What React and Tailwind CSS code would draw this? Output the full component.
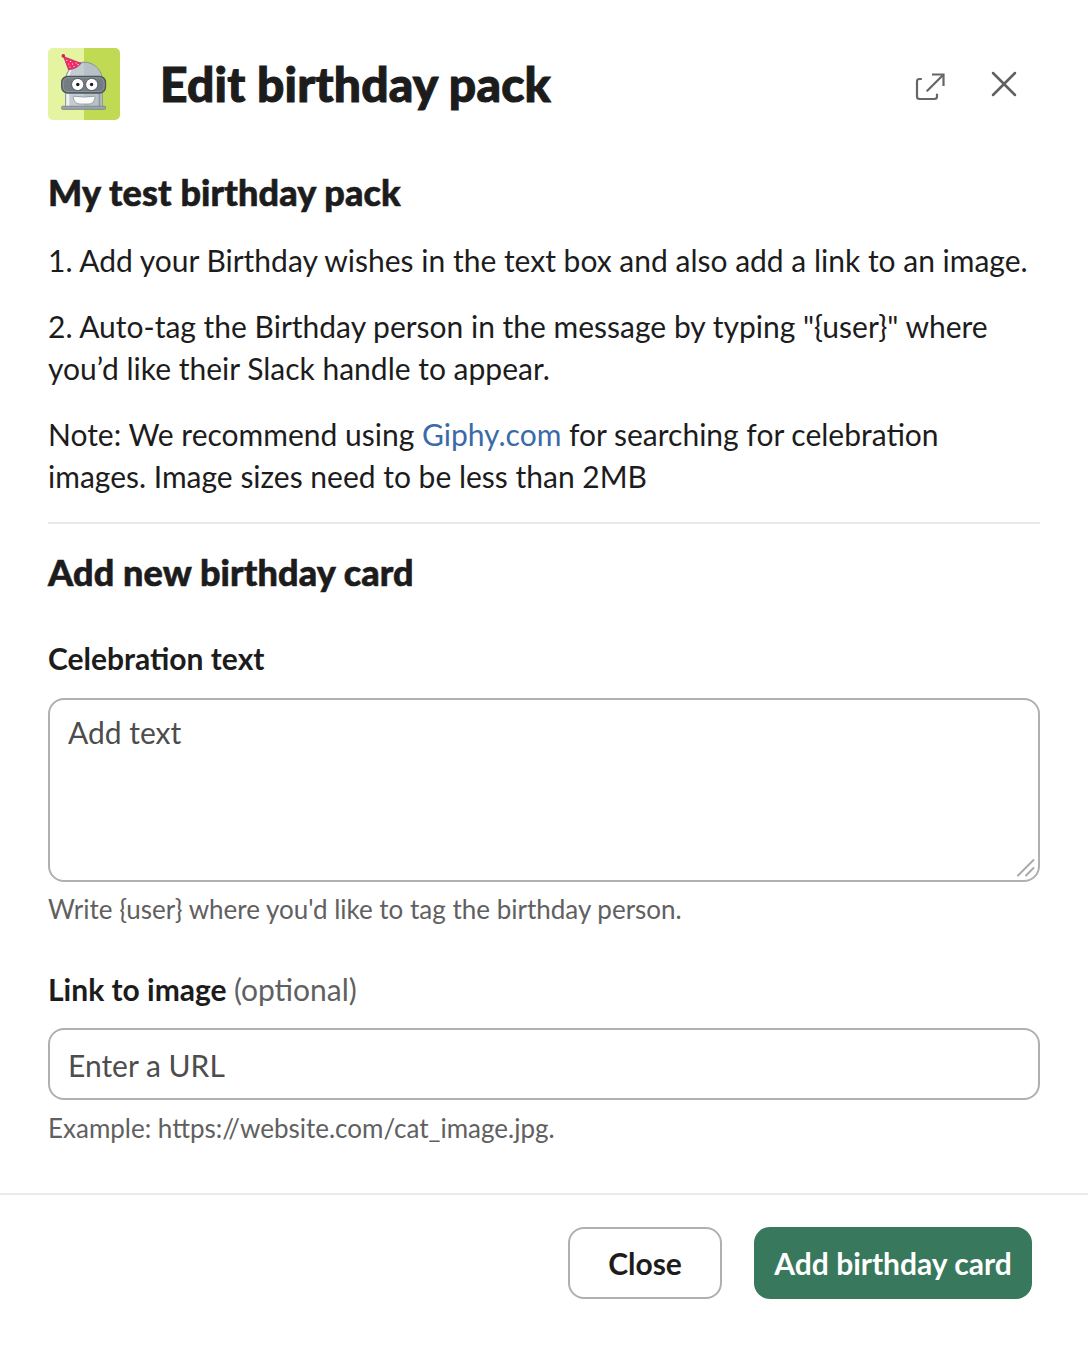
import { useState } from 'react'

function RobotLogo() {
  return (
    <svg viewBox="0 0 72 72" className="size-[72px] shrink-0 rounded-[5px]">
      <rect width="36" height="72" fill="#e4f4a0" />
      <rect x="36" width="36" height="72" fill="#c0da54" />
      {/* head */}
      <path d="M17.700 59V32a18.200 17.700 0 0 1 36.600 0v27z" fill="#c3cdd1" stroke="#858f95" strokeWidth="1" />
      <path d="M18.300 58V32q1-10 8-14.500-5 6-5 14.500v26z" fill="#eef2f3" />
      <path d="M36 14.800q17 1 17.800 17.200v26.500H36z" fill="#a9b5ba" opacity=".5" />
      <path d="M51.500 44v14.500" stroke="#8b979c" strokeWidth="1.600" />
      <rect x="13.600" y="58.200" width="44" height="3.200" rx="1" fill="#9aa4aa" stroke="#727c82" strokeWidth=".7" />
      {/* visor */}
      <rect x="13.700" y="28.300" width="43.800" height="16.700" rx="6" fill="#737b83" stroke="#4d555d" strokeWidth="1.300" />
      <rect x="15.200" y="29.800" width="40.800" height="13.700" rx="4.800" fill="none" stroke="#989fa5" strokeWidth=".7" />
      <circle cx="29.700" cy="36.500" r="6.100" fill="#fff" stroke="#454d54" strokeWidth=".8" />
      <circle cx="43.700" cy="36.500" r="6.100" fill="#fff" stroke="#454d54" strokeWidth=".8" />
      <circle cx="29.800" cy="36.500" r="1.700" fill="#181c1f" />
      <circle cx="43.600" cy="36.500" r="1.700" fill="#181c1f" />
      {/* mouth */}
      <path d="M26 48.300q10.200 1.500 20.300 0 .9 0 .7 1.200c-.8 4.700-3.500 6.500-7 6.500h-7.500c-4 0-6.500-2-7.200-6.500-.1-.9.100-1.300.7-1.200z" fill="#fafafa" stroke="#7b858a" strokeWidth=".7" />
      {/* party hat */}
      <path d="M15.500 8.500L33.200 15.300q-4.500 5.800-12.700 6.500z" fill="#f02a68" stroke="#a92350" strokeWidth=".6" />
      <path d="M18.800 12.300h.1M22.500 13.300h.1M20.600 16h.1M24.500 16h.1M28 15h.1M22 19h.1M26 18.500h.1M30 16.700h.1" stroke="#fff" strokeWidth="1.200" strokeLinecap="round" />
      <circle cx="15.300" cy="7.900" r="1.800" fill="#cf2558" />
    </svg>
  )
}

function OpenIcon() {
  return (
    <svg viewBox="0 0 30 30" className="size-[30px]" fill="none" stroke="#666" strokeWidth="2.200">
      <path d="M6 8H4.500Q2 8 2 10.500v15Q2 28 4.500 28h15q2.500 0 2.500-2.500V23.500" strokeLinecap="round" />
      <path d="M12.300 19.700L28 4" strokeLinecap="round" />
      <path d="M17 3.500h11.500V15" />
    </svg>
  )
}

function CloseIcon() {
  return (
    <svg viewBox="0 0 26 26" className="size-[26px]" fill="none" stroke="#616061" strokeWidth="2.500" strokeLinecap="round">
      <path d="M2 2l22 22M24 2L2 24" />
    </svg>
  )
}

export default function App() {
  const [text, setText] = useState('')
  const [url, setUrl] = useState('')

  return (
    <div className="flex h-[1348px] w-[1088px] flex-col bg-white font-['Lato',sans-serif] text-[30px] leading-[42px] text-[#1d1c1d]">
      <header className="flex items-center pt-12 pr-[71px] pl-12">
        <RobotLogo />
        <h1 className="ml-10 flex-1 text-[48px] leading-[72px] font-black tracking-[0.17px] [-webkit-text-stroke:1px_#1d1c1d]">Edit birthday pack</h1>
        <button type="button" aria-label="Open in new window" className="mt-1">
          <OpenIcon />
        </button>
        <button type="button" aria-label="Close" className="ml-[46px]">
          <CloseIcon />
        </button>
      </header>

      <main className="flex flex-1 flex-col px-12">
        <h2 className="mt-12 text-[36px] leading-[48px] font-black tracking-[0.12px] [-webkit-text-stroke:0.6px_#1d1c1d]">My test birthday pack</h2>
        <div className="mt-[23px] space-y-6">
          <p>1. Add your Birthday wishes in the text box and also add a link to an image.</p>
          <p>
            2. Auto-tag the Birthday person in the message by typing "{'{user}'}" where
            <br />
            you’d like their Slack handle to appear.
          </p>
          <p>
            Note: We recommend using <a href="#" className="text-[#3a6ba8]">Giphy.com</a> for searching for celebration
            <br />
            images. Image sizes need to be less than 2MB
          </p>
        </div>

        <hr className="mt-[25px] border-t-2 border-[#e8e8e8]" />

        <h2 className="mt-6 text-[36px] leading-[48px] font-black tracking-[0.12px] [-webkit-text-stroke:0.6px_#1d1c1d]">Add new birthday card</h2>

        <label htmlFor="text" className="mt-[41px] font-bold">Celebration text</label>
        <div className="relative mt-[19px] h-[184px]">
          <textarea
            id="text"
            value={text}
            onChange={e => setText(e.target.value)}
            placeholder="Add text"
            className="block h-full w-full resize-none rounded-2xl border-2 border-[#b0b0b0] px-[18px] py-[11px] placeholder:text-[#4d4d4d]"
          />
          <svg viewBox="0 0 20 20" className="pointer-events-none absolute right-[5px] bottom-1 size-5" stroke="#aaa" strokeWidth="2" strokeLinecap="round">
            <path d="M3 17.500L18.500 2M11 17.500l7.500-7.500" />
          </svg>
        </div>
        <p className="mt-[7px] text-[26px] leading-[40px] text-[#616061]">Write {'{user}'} where you'd like to tag the birthday person.</p>

        <label htmlFor="url" className="mt-[39px] font-bold">
          Link to image <span className="font-normal text-[#616061]">(optional)</span>
        </label>
        <input
          id="url"
          value={url}
          onChange={e => setUrl(e.target.value)}
          placeholder="Enter a URL"
          className="mt-[18px] h-[72px] w-full rounded-2xl border-2 border-[#b0b0b0] px-[18px] pt-px placeholder:text-[#4d4d4d]"
        />
        <p className="mt-2 text-[26px] leading-[40px] text-[#616061]">Example: https://website.com/cat_image.jpg.</p>
      </main>

      <footer className="flex h-[155px] justify-end gap-8 border-t-2 border-[#ebebeb] pt-8 pr-14 font-bold">
        <button type="button" className="h-[72px] w-[154px] rounded-2xl border-2 border-[#b0b0b0]">Close</button>
        <button type="button" className="h-[72px] w-[278px] rounded-2xl bg-[#38785c] text-white">Add birthday card</button>
      </footer>
    </div>
  )
}
